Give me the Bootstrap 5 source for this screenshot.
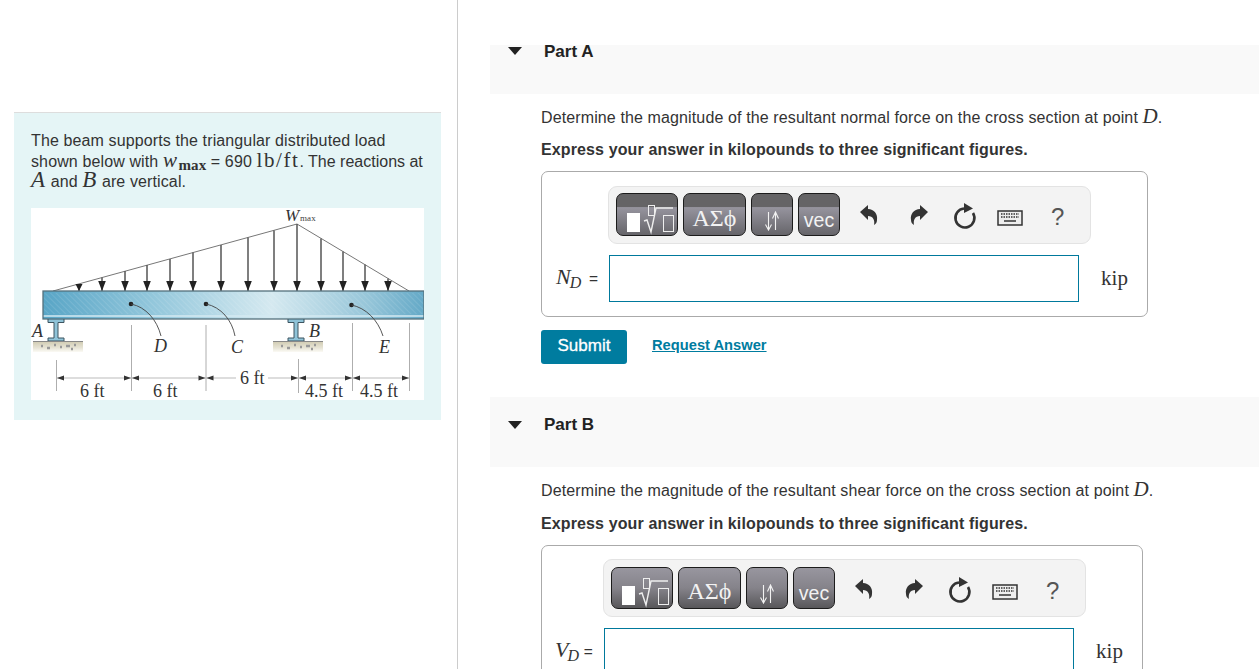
<!DOCTYPE html>
<html lang="en"><head><meta charset="utf-8"><title>Beam</title>
<link rel="stylesheet" href="https://cdn.jsdelivr.net/npm/bootstrap@5.3.0/dist/css/bootstrap.min.css">
<style>
html,body{height:669px;overflow:hidden;background:#fff}
body{font-family:"Liberation Sans",Arial,sans-serif;font-size:16px;color:#333;letter-spacing:.12px}
.shell{height:669px;overflow:hidden}
.leftcol{width:458px;flex:none;border-right:1px solid #ccc;padding:112px 16px 0 14px}
.infobox{width:427px;height:308px;background:#e5f5f6;border-top:1px solid #ddd;padding:18px 17px 0}
.infotext{line-height:20.500px;height:77px;margin:0;width:395px;white-space:nowrap}
.m{font-family:"Liberation Serif",serif;font-size:21px;letter-spacing:1.600px;line-height:0}
.mi{font-family:"Liberation Serif",serif;font-style:italic;font-size:21px;line-height:0}
.mw{letter-spacing:1.500px}
.mab{font-size:23px;letter-spacing:1px}
.ms{font-family:"Liberation Serif",serif;font-size:15px;font-weight:bold;position:relative;top:3px;line-height:0}
.tight{letter-spacing:0}
.beamfig{display:block;width:393px;height:192px;background:#fff}
.rightcol{flex:1;min-width:0;padding:45px 0 0 32px}
.parthead{background:#f9f9f9;display:flex;gap:22px;padding-left:18px;font-weight:700;color:#222;font-size:17px;letter-spacing:0}
.parthead svg{flex:none;margin-top:2px}
.heada{height:49px;line-height:13px}
.headb{height:70px;margin-top:33px;padding-top:21px;line-height:13px}
.headb svg{margin-top:3px}
.partbody{padding:0 0 0 51px}
.q{margin:0;line-height:24px}
.q .mi{line-height:1}
.bodya{padding-top:12px}
.bodyb{padding-top:12px}
.ask{font-weight:700;margin-top:8px}
.bodyb .ask{margin-top:9px}
.ansbox{border:1px solid #aaa;border-radius:7px;position:relative}
.ansa{width:607px;height:146px;margin-top:9px;padding:14px 0 0 66px}
.ansb{width:602px;height:160px;margin-top:9px;padding:13px 0 0 61px}
.tools{width:483px;height:58px;background:#f3f3f3;border:1px solid #e3e3e3;border-radius:9px;padding:6px 0 0 7px;display:flex;align-items:flex-start}
.tools.gb{padding-top:7px}
.tb{height:43px;border:1px solid #1c1c1c;border-radius:7px;color:#f2f2f2;display:flex;align-items:flex-end;justify-content:center;margin-right:5px;flex:none;padding:0;letter-spacing:0}
.gb .tb{height:42px}
.ga .tb{background:linear-gradient(#656466 0,#656466 32%,#96949e 33%,#66656a 100%)}
.gb .tb{background:linear-gradient(#98969f 0,#85838a 50%,#58575a 100%)}
.tb1{width:62px}.tb2{width:63px}.tb3{width:42px}.tb4{width:42px}
.tb2{font-family:"Liberation Serif",serif;font-size:24px;line-height:34px}
.tb4{font-size:19.500px;line-height:30px}
.ticons{flex:none;display:block;margin-left:14px;overflow:visible}
.helpq{font-size:24px;fill:#555;font-family:"Liberation Sans",sans-serif}
.eqrow{display:flex;align-items:flex-start;margin-left:1px;margin-top:11px}
.eqlabel{width:0;white-space:nowrap;position:relative}
.eqtxt{position:absolute;top:10px;line-height:28px;font-size:15.500px}
.eqna{left:-53px}
.eqvd{left:-49px}
.mlab{font-family:"Liberation Serif",serif;font-style:italic;font-size:22px;line-height:1}
.msub{font-family:"Liberation Serif",serif;font-style:italic;font-size:16px;position:relative;top:4px;left:-1px;margin-right:2px;line-height:1}
.eqvd .msub{margin-right:-1px}
.ansinput{display:block;width:470px;height:47px;border:1px solid #00799c;background:#fff;border-radius:0;flex:none}
.unit{font-family:"Liberation Serif",serif;font-size:21px;margin-left:22px;line-height:46px}
.actions{display:flex;align-items:center;gap:25px;margin-top:13px}
.subbtn{width:86px;height:34px;background:#007c9f;color:#fff;border:0;border-radius:3px;font-size:17px;font-weight:400;padding:0 0 2px;-webkit-text-stroke:.3px #fff;letter-spacing:0}
.subbtn:hover{background:#007c9f;color:#fff}
.reqlink{color:#007c9f;font-weight:700;font-size:14.700px;text-decoration:underline;letter-spacing:0;margin-bottom:3px}
.fs{font-family:"Liberation Serif",serif;font-size:18px;fill:#333;letter-spacing:0}
.fi{font-family:"Liberation Serif",serif;font-style:italic;font-size:18px;fill:#333;letter-spacing:0}
.fw{font-size:17px}
</style></head>
<body>
<svg width="0" height="0" class="position-absolute">
<defs>
<symbol id="icon-root" viewBox="1 1 60 41">
<rect x="11" y="20" width="13" height="19" fill="#fff"/>
<rect x="32.500" y="12.500" width="6" height="10" fill="none" stroke="#eee" stroke-width="1"/>
<path d="M28 28l3-1 4 12 5-24h17" fill="none" stroke="#eee" stroke-width="1.400"/>
<rect x="47.500" y="22.500" width="10" height="16" fill="none" stroke="#eee" stroke-width="1"/>
</symbol>
<symbol id="icon-updown" viewBox="0 0 16 20">
<path d="M4.500 1V18M1.500 13.500 4.500 19 7.500 13.500M11.500 19V2M8.500 7.500 11.500 1 14.500 7.500" fill="none" stroke="#f2f2f2" stroke-width="1.100"/>
</symbol>
<symbol id="icon-actions" viewBox="0 0 210 32" overflow="visible">
<path fill="#333" d="M1 8 9 1V5C15 5 19 10 18 16 18 18 17 20 15 21 16 16 14 12 9 12V16Z"/>
<path fill="#333" transform="translate(70 0) scale(-1 1)" d="M1 8 9 1V5C15 5 19 10 18 16 18 18 17 20 15 21 16 16 14 12 9 12V16Z"/>
<path d="M105 4.500A9.500 9.500 0 1 0 114 9" fill="none" stroke="#333" stroke-width="2.600"/>
<path fill="#333" d="M105 -1 114 4.500 105 9Z"/>
<rect x="139" y="7" width="24" height="14" fill="#eee" stroke="#333" stroke-width="1.500"/>
<path d="M142 10h18M142 13h18" stroke="#333" stroke-width="1.500" stroke-dasharray="1.500 1"/>
<path d="M145 17h12" stroke="#333" stroke-width="1.500"/>
<text x="192" y="21" class="helpq">?</text>
</symbol>
<pattern id="hatch" width="4" height="4" patternUnits="userSpaceOnUse" patternTransform="rotate(-45)"><path d="M0 0V4" stroke="#fff" stroke-opacity=".22" stroke-width="1"/></pattern>
<linearGradient id="steel" x1="0" x2="1" y1="0" y2="0"><stop offset="0" stop-color="#58a5c6"/><stop offset=".3" stop-color="#95c8dc"/><stop offset=".6" stop-color="#d5e9f0"/><stop offset=".85" stop-color="#97c6d9"/><stop offset="1" stop-color="#64a9c7"/></linearGradient>
<linearGradient id="ground" x1="0" x2="0" y1="0" y2="1"><stop offset="0" stop-color="#cfcab0"/><stop offset=".6" stop-color="#e6e3d4"/><stop offset="1" stop-color="#fbfaf5"/></linearGradient>
<symbol id="support" viewBox="0 0 50 33">
<path d="M15 0H31V3.500H25V19H31V22H15V19H21V3.500H15Z" fill="#8fc3d8" stroke="#3d5560" stroke-width="1"/>
<rect x="0" y="22" width="50" height="11" fill="url(#ground)"/>
<path d="M0 22.500H50" stroke="#888" stroke-width="1"/>
<path d="M8 27h2M14 29h3M21 26h2M27 28h2M33 27h4M41 26h2M38 30h2" stroke="#999" stroke-width="2.500"/>
</symbol>
</defs>
</svg>
<div class="shell d-flex">
<aside class="leftcol">
<div class="infobox">
<p class="infotext">The beam supports the triangular distributed load<br>shown below with <span class="mi mw">w</span><span class="ms">max</span> = 690 <span class="m">lb/ft</span><span class="tight">. The reactions at</span><br><span class="mi mab">A</span> and <span class="mi mab">B</span> are vertical.</p>
<svg class="beamfig" viewBox="31 208 393 192" role="img" aria-label="Beam diagram">
<path d="M53 291 297 224 409 291" fill="none" stroke="#777" stroke-width="1"/>
<g stroke="#555" stroke-width="1.500">
<path d="M79 284V291M102 277.500V291M125 271V291M147 265V291M170 259V291M193 252.500V291M221 245V291M248 237.500V291M274 230.500V291M297 224V291M321 238.500V291M343 251.500V291M365 264.500V291M388 278.500V291"/>
</g>
<g fill="#222">
<path d="M75.500 284h7L79 291ZM98.200 281h7.600L102 291ZM121.200 281h7.600L125 291ZM143.200 281h7.600L147 291ZM166.200 281h7.600L170 291ZM189.200 281h7.600L193 291ZM217.200 281h7.600L221 291ZM244.200 281h7.600L248 291ZM270.200 281h7.600L274 291ZM293.200 281h7.600L297 291ZM317.200 281h7.600L321 291ZM339.200 281h7.600L343 291ZM361.200 281h7.600L365 291ZM384.200 281h7.600L388 291Z"/>
</g>
<rect x="43" y="291" width="381" height="28" fill="url(#steel)"/>
<rect x="43" y="293" width="381" height="21" fill="url(#hatch)"/>
<path d="M43 316H424" stroke="#d5eaf2" stroke-width="1.500"/>
<rect x="43" y="291" width="381" height="28" fill="none" stroke="#55707c" stroke-width="1.300"/>
<use href="#support" x="33" y="319" width="50" height="33"/>
<use href="#support" x="273" y="319" width="50" height="33"/>
<g fill="#222"><circle cx="131" cy="304" r="2.300"/><circle cx="206" cy="304" r="2.300"/><circle cx="351.500" cy="305" r="2.300"/></g>
<path d="M131 304C146 307 157 320 161 336M206 304C221 307 232 320 235 336M351.500 305C366 308 378 320 383 336" fill="none" stroke="#444" stroke-width=".9"/>
<path d="M56.500 360V391M131.500 325V391M206 325V391M298.500 359V393M352.500 323V391M409.500 323V391" stroke="#999" stroke-width=".8"/>
<path d="M56.500 378H236M268 378H409" stroke="#bbb" stroke-width="1"/>
<g fill="#333">
<path d="M57 378l7-2.500v5ZM131 378l-7-2.500v5ZM132 378l7-2.500v5ZM205.500 378l-7-2.500v5ZM206.500 378l7-2.500v5ZM298 378l-7-2.500v5ZM299 378l7-2.500v5ZM352 378l-7-2.500v5ZM353 378l7-2.500v5ZM409 378l-7-2.500v5Z"/>
</g>
<text x="80" y="397" class="fs">6 ft</text>
<text x="153" y="397" class="fs">6 ft</text>
<text x="240" y="384" class="fs">6 ft</text>
<text x="305" y="397" class="fs">4.5 ft</text>
<text x="360" y="397" class="fs">4.5 ft</text>
<text x="32" y="337" class="fi">A</text>
<text x="154" y="352" class="fi">D</text>
<text x="231" y="353" class="fi">C</text>
<text x="309" y="337" class="fi">B</text>
<text x="379" y="353" class="fi">E</text>
<text x="285" y="220.500" class="fi fw">W</text>
<text x="300" y="221" font-family="Liberation Serif" font-size="9" fill="#444">max</text>
</svg>
</div>
</aside>
<main class="rightcol">
<section>
<div class="parthead heada"><svg width="14" height="8" viewBox="0 0 14 8"><path d="M0 0H14L7 8Z" fill="#222"/></svg><span>Part A</span></div>
<div class="partbody bodya">
<p class="q">Determine the magnitude of the resultant normal force on the cross section at point <span class="mi">D</span>.</p>
<p class="q ask">Express your answer in kilopounds to three significant figures.</p>
<div class="ansbox ansa">
<div class="tools ga">
<button class="tb tb1" type="button"><svg width="60" height="41"><use href="#icon-root" width="60" height="41"/></svg></button>
<button class="tb tb2" type="button">ΑΣϕ</button>
<button class="tb tb3" type="button"><svg width="16" height="20" class="mb-1"><use href="#icon-updown" width="16" height="20"/></svg></button>
<button class="tb tb4" type="button">vec</button>
<svg class="ticons" width="210" height="40"><use href="#icon-actions" width="210" height="32" y="11"/></svg>
</div>
<div class="eqrow">
<div class="eqlabel"><div class="eqtxt eqna"><span class="mlab">N</span><span class="msub">D</span> =</div></div>
<input class="ansinput" type="text" aria-label="N D">
<span class="unit">kip</span>
</div>
</div>
<div class="actions">
<button class="btn subbtn" type="button">Submit</button>
<a class="reqlink" href="#">Request Answer</a>
</div>
</div>
</section>
<section>
<div class="parthead headb"><svg width="14" height="8" viewBox="0 0 14 8"><path d="M0 0H14L7 8Z" fill="#222"/></svg><span>Part B</span></div>
<div class="partbody bodyb">
<p class="q">Determine the magnitude of the resultant shear force on the cross section at point <span class="mi">D</span>.</p>
<p class="q ask">Express your answer in kilopounds to three significant figures.</p>
<div class="ansbox ansb">
<div class="tools gb">
<button class="tb tb1" type="button"><svg width="60" height="41"><use href="#icon-root" width="60" height="41"/></svg></button>
<button class="tb tb2" type="button">ΑΣϕ</button>
<button class="tb tb3" type="button"><svg width="16" height="20" class="mb-1"><use href="#icon-updown" width="16" height="20"/></svg></button>
<button class="tb tb4" type="button">vec</button>
<svg class="ticons" width="210" height="40"><use href="#icon-actions" width="210" height="32" y="11"/></svg>
</div>
<div class="eqrow">
<div class="eqlabel"><div class="eqtxt eqvd"><span class="mlab">V</span><span class="msub">D</span> =</div></div>
<input class="ansinput" type="text" aria-label="V D">
<span class="unit">kip</span>
</div>
</div>
</div>
</section>
</main>
</div>
</body></html>
